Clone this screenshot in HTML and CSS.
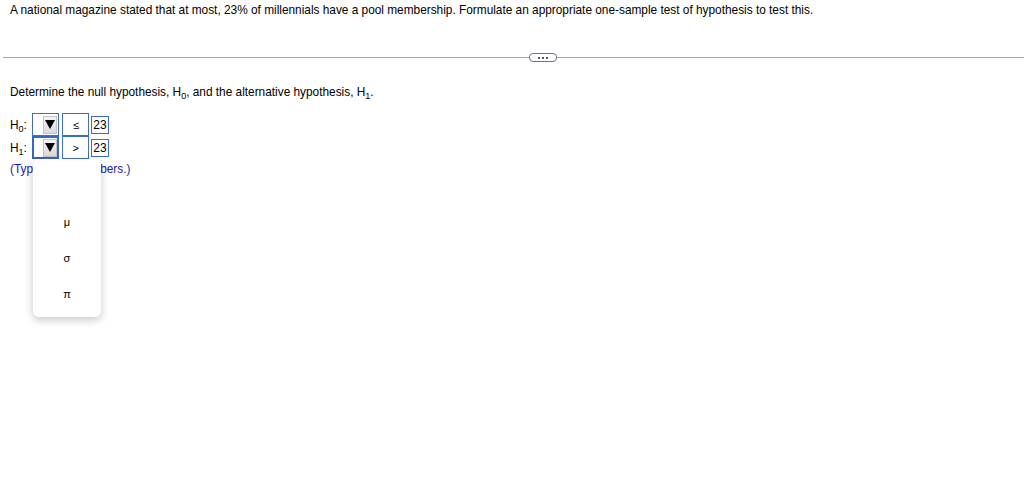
FILE: index.html
```
<!DOCTYPE html>
<html>
<head>
<meta charset="utf-8">
<link rel="stylesheet" href="styles.css">
</head>
<body>
<div class="question">A national magazine stated that at most, 23% of millennials have a pool membership. Formulate an appropriate one-sample test of hypothesis to test this.</div>
<div class="divider">
  <div class="line left"></div>
  <div class="pill"><span></span><span></span><span></span></div>
  <div class="line"></div>
</div>
<div class="prompt">Determine the null hypothesis, H<sub>0</sub>, and the alternative hypothesis, H<sub>1</sub>.</div>
<div class="work">
  <div class="row">
    <span class="lbl">H<sub>0</sub>:</span>
    <span class="sel"><span class="btn"><span class="tri"></span></span></span>
    <span class="sym">≤</span>
    <span class="inp">23</span>
  </div>
  <div class="row">
    <span class="lbl">H<sub>1</sub>:</span>
    <span class="sel focus"><span class="btn"><span class="tri"></span></span></span>
    <span class="sym">&gt;</span>
    <span class="inp">23</span>
  </div>
  <div class="note">(Type whole numbers.)</div>
  <ul class="menu">
    <li class="opt">μ</li>
    <li class="opt">σ</li>
    <li class="opt">π</li>
  </ul>
</div>
</body>
</html>
```
FILE: styles.css
```
html, body { margin: 0; padding: 0; background: #fff; }
html { height: 100%; }
body { min-height: 100%; font-family: "Liberation Sans", Arial, sans-serif; font-size: 11.85px; color: #000; }
.question { padding: 3px 10px 0 10px; line-height: 14px; }
.divider { display: flex; align-items: center; margin: 36px 0 0 3px; height: 9px; }
.line { flex: 1; height: 1px; background: #a3a3ab; }
.line.left { flex: 0 0 526px; }
.pill { width: 26px; height: 7px; border: 1px solid #6d7587; border-radius: 4px; display: flex; align-items: center; justify-content: center; gap: 2px; }
.pill span { width: 2px; height: 2px; background: #4f5870; }
.prompt { padding: 0 10px; margin-top: 23px; line-height: 14px; }
sub { font-size: 9px; vertical-align: -3px; line-height: 0; }
.work { position: relative; padding: 0 10px; margin-top: 14px; min-height: 220px; }
.row { display: flex; align-items: center; height: 23px; }
.lbl { width: 22px; }
.sel { box-sizing: border-box; width: 27px; height: 23px; border: 1px solid #3f6ccf; display: flex; align-items: center; justify-content: flex-end; padding-right: 1px; background: #fff; }
.sel.focus { border: 2px solid #3566c9; padding-right: 0; }
.btn { box-sizing: border-box; width: 14px; height: 18px; background: linear-gradient(#f4f4f4, #dadada); border: 1px solid #c4c4c4; display: flex; align-items: center; justify-content: center; }
.tri { width: 0; height: 0; border-left: 5px solid transparent; border-right: 5px solid transparent; border-top: 9px solid #000; }
.sym { box-sizing: border-box; width: 27px; height: 23px; border: 1px solid #3f6ccf; margin-left: 3px; display: flex; align-items: center; justify-content: flex-end; padding-right: 9px; font-size: 11px; }
.inp { box-sizing: border-box; width: 18px; height: 18px; border: 1px solid #3f6ccf; margin-left: 2px; display: flex; align-items: center; justify-content: center; font-size: 12px; }
.note { color: #1a1aa6; line-height: 14px; margin-top: 3px; }
.menu { list-style: none; margin: 0; position: absolute; z-index: 5; left: 33px; top: 46px; width: 68px; height: 158px; background: #fff; border-radius: 6px; box-shadow: 0 3px 8px rgba(0,0,0,0.22); display: flex; flex-direction: column; align-items: center; padding: 56px 0 0 0; box-sizing: border-box; gap: 22px; }
.opt { font-size: 11px; line-height: 14px; color: #000; display: block; }
```
